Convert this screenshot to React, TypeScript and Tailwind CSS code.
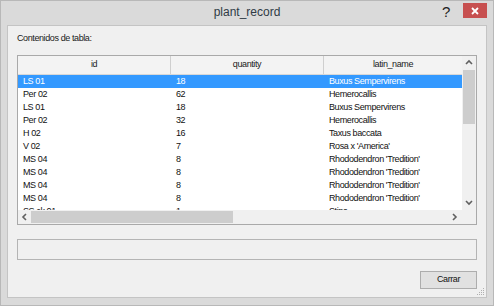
const rows: [string, string, string][] = [
  ["LS 01", "18", "Buxus Sempervirens"],
  ["Per 02", "62", "Hemerocallis"],
  ["LS 01", "18", "Buxus Sempervirens"],
  ["Per 02", "32", "Hemerocallis"],
  ["H 02", "16", "Taxus baccata"],
  ["V 02", "7", "Rosa x 'America'"],
  ["MS 04", "8", "Rhododendron 'Tredition'"],
  ["MS 04", "8", "Rhododendron 'Tredition'"],
  ["MS 04", "8", "Rhododendron 'Tredition'"],
  ["MS 04", "8", "Rhododendron 'Tredition'"],
  ["SS ck 01", "1", "Stipa"],
];

const font = { fontFamily: '"Liberation Sans", Arial, sans-serif' };

function Chevron({ dir }: { dir: "up" | "down" | "left" | "right" }) {
  const d = {
    up: "M1 5 L4 2 L7 5",
    down: "M1 2 L4 5 L7 2",
    left: "M5 1 L2 4 L5 7",
    right: "M2 1 L5 4 L2 7",
  }[dir];
  return (
    <svg width="8" height="8" viewBox="0 0 8 8">
      <path d={d} fill="none" stroke="#606060" strokeWidth="1.6" />
    </svg>
  );
}

export default function App() {
  return (
    <div
      className="w-[494px] h-[306px] bg-[#dadada] border border-[#b8b8b8] flex flex-col"
      style={font}
    >
      {/* barra de titulo */}
      <div className="relative h-[24px] shrink-0">
        <div className="absolute inset-0 flex items-center justify-center pb-[2px] text-[12px] text-[#2f3a46]">
          plant_record
        </div>
        <div className="absolute left-[441px] top-[0px] text-[15px] text-[#222]">?</div>
        <div className="absolute left-[462px] top-[2px] w-[24px] h-[15px] bg-[#c75050] flex items-center justify-center">
          <svg width="8" height="8" viewBox="0 0 8 8">
            <path d="M1 1 L7 7 M7 1 L1 7" stroke="#fff" strokeWidth="1.8" />
          </svg>
        </div>
      </div>

      {/* area cliente */}
      <div className="flex-1 mx-[6px] mb-[7px] border border-[#c4c4c4] bg-[#f0f0f0] px-[9px] flex flex-col relative">
        <div className="mt-[6px] text-[9px] leading-[12px] tracking-[-0.4px] text-[#1a1a1a]">
          Contenidos de tabla:
        </div>

        {/* tabla */}
        <div className="mt-[11px] h-[170px] border border-[#a9a9a9] bg-white flex overflow-hidden">
          <div className="flex-1 flex flex-col min-w-0">
            <div className="h-[19px] shrink-0 flex bg-[#f3f3f3] border-b border-[#d8d8d8] text-[9px] tracking-[-0.4px] text-[#1a1a1a]">
              <div className="w-[153px] border-r border-[#cfcfcf] flex items-center justify-center">id</div>
              <div className="w-[153px] border-r border-[#cfcfcf] flex items-center justify-center">quantity</div>
              <div className="flex-1 flex items-center justify-center">latin_name</div>
            </div>
            <div className="flex-1 overflow-hidden">
              {rows.map((r, i) => (
                <div
                  key={i}
                  className={`h-[13px] flex text-[9px] leading-[13px] tracking-[-0.4px] whitespace-nowrap ${
                    i === 0 ? "bg-[#3399ff] text-white" : "text-[#111]"
                  }`}
                >
                  <div className="w-[153px] pl-[5px]">{r[0]}</div>
                  <div className="w-[153px] pl-[5px]">{r[1]}</div>
                  <div className="flex-1 pl-[5px]">{r[2]}</div>
                </div>
              ))}
            </div>
            {/* scroll horizontal */}
            <div className="h-[14px] shrink-0 bg-[#f0f0f0] flex items-center">
              <div className="w-[13px] flex items-center justify-center">
                <Chevron dir="left" />
              </div>
              <div className="w-[202px] h-[12px] bg-[#cdcdcd]" />
              <div className="flex-1" />
              <div className="w-[14px] flex items-center justify-center">
                <Chevron dir="right" />
              </div>
            </div>
          </div>
          {/* scroll vertical */}
          <div className="w-[14px] shrink-0 flex flex-col bg-[#f0f0f0]">
            <div className="h-[14px] flex items-center justify-center">
              <Chevron dir="up" />
            </div>
            <div className="mx-[1px] h-[54px] bg-[#cdcdcd]" />
            <div className="flex-1" />
            <div className="h-[14px] flex items-center justify-center">
              <Chevron dir="down" />
            </div>
            <div className="h-[14px] bg-[#f0f0f0]" />
          </div>
        </div>

        {/* campo de texto */}
        <div className="mt-[14px] h-[21px] border border-[#b4b4b4] bg-[#f0f0f0]" />

        {/* boton */}
        <div className="mt-[11px] flex justify-end">
          <button className="w-[57px] h-[18px] bg-[#e1e1e1] border border-[#adadad] text-[9px] tracking-[-0.4px] text-[#111] flex items-center justify-center">
            Carrar
          </button>
        </div>

        {/* agarre */}
        <svg className="absolute right-[1px] bottom-[1px]" width="8" height="8" viewBox="0 0 8 8">
          <rect x="6" y="0" width="1" height="1" fill="#b0b0b0" />
          <rect x="4" y="2" width="1" height="1" fill="#b0b0b0" />
          <rect x="6" y="2" width="1" height="1" fill="#b0b0b0" />
          <rect x="2" y="4" width="1" height="1" fill="#b0b0b0" />
          <rect x="4" y="4" width="1" height="1" fill="#b0b0b0" />
          <rect x="6" y="4" width="1" height="1" fill="#b0b0b0" />
          <rect x="0" y="6" width="1" height="1" fill="#b0b0b0" />
          <rect x="2" y="6" width="1" height="1" fill="#b0b0b0" />
          <rect x="4" y="6" width="1" height="1" fill="#b0b0b0" />
          <rect x="6" y="6" width="1" height="1" fill="#b0b0b0" />
        </svg>
      </div>
    </div>
  );
}
